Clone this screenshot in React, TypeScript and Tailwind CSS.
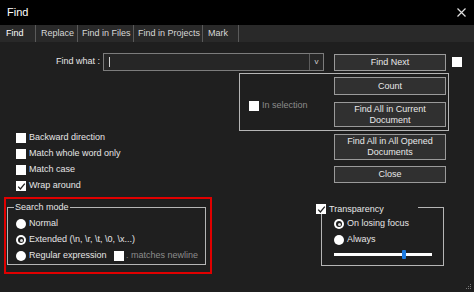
import type { ReactNode } from 'react';

const font = { fontFamily: '"Liberation Sans", Arial, sans-serif' };

function Box({ checked = false }: { checked?: boolean }) {
  return (
    <span className="flex w-[10px] h-[10px] shrink-0 items-center justify-center bg-white">
      {checked && (
        <svg width="9" height="9" viewBox="0 0 9 9">
          <path d="M1.2 4.6 L3.4 7 L7.8 1.6" fill="none" stroke="#222" strokeWidth="1.3" />
        </svg>
      )}
    </span>
  );
}

function Radio({ on = false }: { on?: boolean }) {
  return on ? (
    <span className="flex w-[10px] h-[10px] shrink-0 items-center justify-center rounded-full bg-white">
      <span className="w-[6px] h-[6px] rounded-full bg-[#1f1f1f] flex items-center justify-center">
        <span className="w-[3px] h-[3px] rounded-full bg-[#ddd]" />
      </span>
    </span>
  ) : (
    <span className="w-[10px] h-[10px] shrink-0 rounded-full bg-white" />
  );
}

function Btn({ children, h, w = 'w-[112px]' }: { children: ReactNode; h: string; w?: string }) {
  return (
    <div className={`${w} ${h} flex items-center justify-center text-center leading-[11px] border border-[#9a9a9a] bg-[#303030] text-[#e8e8e8]`}>
      {children}
    </div>
  );
}

const tabs = [
  { label: 'Find', w: 'w-[36px]', pl: 'pl-[6px]', active: true },
  { label: 'Replace', w: 'w-[42px]', pl: 'pl-[5px]' },
  { label: 'Find in Files', w: 'w-[56px]', pl: 'pl-[4px]' },
  { label: 'Find in Projects', w: 'w-[69px]', pl: 'pl-[4px]' },
  { label: 'Mark', w: 'w-[36px]', pl: 'pl-[5px]' },
];

export default function App() {
  return (
    <div className="relative w-[474px] h-[292px] overflow-hidden bg-[#1f1f1f] text-[9px] text-[#e6e6e6]" style={font}>
      {/* title bar */}
      <div className="h-[25px] bg-black flex items-center justify-between pl-[7px] pr-[8px]">
        <span className="text-[11px] text-white">Find</span>
        <svg width="9" height="9" viewBox="0 0 9 9">
          <path d="M0.5 0.5 L8.5 8.5 M8.5 0.5 L0.5 8.5" stroke="#e0e0e0" strokeWidth="1.2" />
        </svg>
      </div>

      {/* tabs */}
      <div className="h-[17px] bg-[#292929] flex items-stretch">
        {tabs.map(t => (
          <div key={t.label} className={`${t.w} ${t.pl} flex items-center border-r border-[#5a5a5a] ${t.active ? 'text-white' : 'text-[#d8d8d8]'}`}>
            {t.label}
          </div>
        ))}
      </div>

      {/* find what row */}
      <div className="mt-[11px] flex items-center h-[18px]">
        <span className="w-[100px] text-right">Find what :</span>
        <div className="ml-[3px] w-[221px] h-[18px] flex border border-[#7c7c7c] bg-[#262626]">
          <span className="ml-[5px] mt-[3px] w-[1px] h-[10px] bg-[#d0d0d0]" />
          <span className="flex-1" />
          <span className="w-[14px] border-l border-[#5c5c5c] flex items-center justify-center text-[8px] text-[#cfcfcf]">v</span>
        </div>
        <div className="ml-[10px]">
          <Btn h="h-[17px]">Find Next</Btn>
        </div>
        <span className="ml-[6px]"><Box /></span>
      </div>

      {/* in selection group */}
      <div className="mt-[2px] flex">
        <div className="ml-[239px] w-[210px] h-[58px] border border-[#b5b5b5] flex">
          <div className="w-[94px] flex items-center pl-[9px] pt-[7px] gap-[3px] text-[#8c8c8c]">
            <Box />
            <span>In selection</span>
          </div>
          <div className="pt-[3px] flex flex-col gap-[7px]">
            <Btn h="h-[18px]">Count</Btn>
            <Btn h="h-[25px]">Find All in Current<br />Document</Btn>
          </div>
        </div>
      </div>

      {/* options + buttons */}
      <div className="flex">
        <div className="w-[334px] -mt-[1px] pl-[16px] flex flex-col">
          {['Backward direction', 'Match whole word only', 'Match case', 'Wrap around'].map((l, i) => (
            <div key={l} className="h-[16px] flex items-center gap-[3px]">
              <Box checked={i === 3} />
              <span>{l}</span>
            </div>
          ))}
        </div>
        <div className="pt-[3px] flex flex-col gap-[6px]">
          <Btn h="h-[26px]">Find All in All Opened<br />Documents</Btn>
          <Btn h="h-[17px]">Close</Btn>
        </div>
      </div>

      {/* bottom row */}
      <div className="mt-[3px] flex items-start">
        <div className="ml-[4px] w-[208px] h-[77px] border-2 border-[#e00000] pt-[8px] pl-[1px]">
          <div className="relative w-[199px] h-[58px] border border-[#b5b5b5] pt-[8px] pl-[8px]">
            <span className="absolute -top-[6px] left-[6px] px-[1px] bg-[#1f1f1f] leading-[10px]">Search mode</span>
            <div className="h-[16px] flex items-center gap-[3px]"><Radio /><span>Normal</span></div>
            <div className="h-[16px] flex items-center gap-[3px]"><Radio on /><span>Extended (\n, \r, \t, \0, \x...)</span></div>
            <div className="h-[16px] flex items-center">
              <Radio />
              <span className="ml-[3px] w-[85px]">Regular expression</span>
              <Box />
              <span className="ml-[2px] text-[#8c8c8c]">. matches newline</span>
            </div>
          </div>
        </div>

        <div className="relative ml-[109px] mt-[10px] w-[123px] h-[59px] border border-[#b5b5b5] pt-[8px] pl-[12px]">
          <span className="absolute -top-[4px] -left-[6px] flex items-center gap-[3px] pr-[3px] bg-[#1f1f1f] leading-[10px]">
            <Box checked />
            <span>Transparency</span>
            <span className="w-[28px]" />
          </span>
          <div className="h-[16px] flex items-center gap-[3px]"><Radio on /><span>On losing focus</span></div>
          <div className="h-[16px] flex items-center gap-[3px]"><Radio /><span>Always</span></div>
          <div className="relative mt-[5px] w-[98px] h-[3px] bg-white">
            <span className="absolute -top-[3px] left-[68px] w-[4px] h-[9px] rounded-[1px] bg-[#1e7be0]" />
          </div>
        </div>
      </div>

      <svg className="absolute right-[2px] bottom-[2px]" width="6" height="6" viewBox="0 0 6 6">
        <rect x="4" y="0" width="1" height="1" fill="#777" />
        <rect x="2" y="2" width="1" height="1" fill="#777" />
        <rect x="4" y="2" width="1" height="1" fill="#777" />
        <rect x="0" y="4" width="1" height="1" fill="#777" />
        <rect x="2" y="4" width="1" height="1" fill="#777" />
        <rect x="4" y="4" width="1" height="1" fill="#777" />
      </svg>
    </div>
  );
}
